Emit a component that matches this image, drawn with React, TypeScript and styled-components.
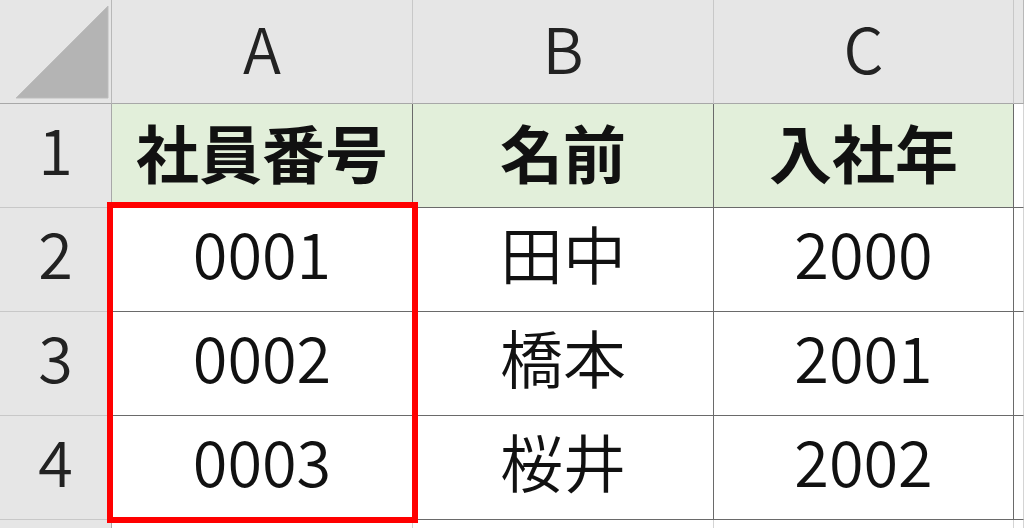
import React from "react";
import styled, { createGlobalStyle } from "styled-components";

const Global = createGlobalStyle`
  html, body { margin: 0; padding: 0; background: #ffffff; }
  body { font-family: "Noto Sans CJK JP", "Noto Sans", sans-serif; }
`;

const Sheet = styled.div`
  position: relative;
  display: grid;
  grid-template-columns: 112px 301px 301px 300px 1fr;
  grid-template-rows: 104px 104px 104px 104px 104px 8px;
  width: 1024px;
  height: 528px;
  overflow: hidden;
  background: #ffffff;
`;

const Corner = styled.div`
  box-sizing: border-box;
  background: #e6e6e6;
  border-right: 1px solid #b8b8b8;
  border-bottom: 1px solid #a8a8a8;
  display: flex;
  align-items: flex-end;
  justify-content: flex-end;
  padding: 0 2px 4px 0;
`;

const ColHead = styled.div<{ $edge?: boolean }>`
  box-sizing: border-box;
  background: #e6e6e6;
  border-right: 1px solid ${(p) => (p.$edge ? "#b8b8b8" : "#c8c8c8")};
  border-bottom: 1px solid #a8a8a8;
  display: flex;
  align-items: center;
  justify-content: center;
  padding-bottom: 10px;
  font-size: 63px;
  font-weight: 350;
  color: #222222;
  line-height: 1;
`;

const RowHead = styled.div`
  box-sizing: border-box;
  background: #e6e6e6;
  border-right: 1px solid #a8a8a8;
  border-bottom: 1px solid #c8c8c8;
  display: flex;
  align-items: center;
  justify-content: center;
  padding-bottom: 16px;
  font-size: 63px;
  font-weight: 350;
  color: #222222;
  line-height: 1;
`;

const Cell = styled.div<{ $head?: boolean; $edge?: boolean }>`
  box-sizing: border-box;
  background: ${(p) => (p.$head ? "#e2efda" : "#ffffff")};
  border-right: 1px solid ${(p) => (p.$edge ? "#d4d4d4" : "#6a6a6a")};
  border-bottom: 1px solid #6a6a6a;
  display: flex;
  align-items: center;
  justify-content: center;
  padding-bottom: ${(p) => (p.$head ? "10px" : "16px")};
  font-size: 63px;
  font-weight: ${(p) => (p.$head ? 700 : 350)};
  color: #111111;
  line-height: 1;
`;

const Filler = styled.div<{ $gray?: boolean }>`
  box-sizing: border-box;
  background: ${(p) => (p.$gray ? "#e6e6e6" : "#ffffff")};
  border-right: 1px solid ${(p) => (p.$gray ? "#a8a8a8" : "#d4d4d4")};
`;

const Highlight = styled.div`
  position: absolute;
  left: 107px;
  top: 202px;
  width: 311px;
  height: 321px;
  box-sizing: border-box;
  border: 6px solid #ff0000;
  pointer-events: none;
`;

const rows = [
  { n: "1", cells: ["社員番号", "名前", "入社年"], head: true },
  { n: "2", cells: ["0001", "田中", "2000"] },
  { n: "3", cells: ["0002", "橋本", "2001"] },
  { n: "4", cells: ["0003", "桜井", "2002"] },
];

export default function App() {
  return (
    <>
      <Global />
      <Sheet>
        <Corner>
          <svg width="94" height="94" viewBox="0 0 94 94">
            <polygon points="1,93 93,1 93,93" fill="#b4b4b4" stroke="#bdbdbd" strokeWidth="1" />
          </svg>
        </Corner>
        <ColHead>A</ColHead>
        <ColHead>B</ColHead>
        <ColHead>C</ColHead>
        <ColHead $edge />
        {rows.map((r) => (
          <React.Fragment key={r.n}>
            <RowHead>{r.n}</RowHead>
            {r.cells.map((c, i) => (
              <Cell key={i} $head={r.head}>
                {c}
              </Cell>
            ))}
            <Cell $edge />
          </React.Fragment>
        ))}
        <Filler $gray />
        <Filler />
        <Filler />
        <Filler />
        <Filler />
        <Highlight />
      </Sheet>
    </>
  );
}
